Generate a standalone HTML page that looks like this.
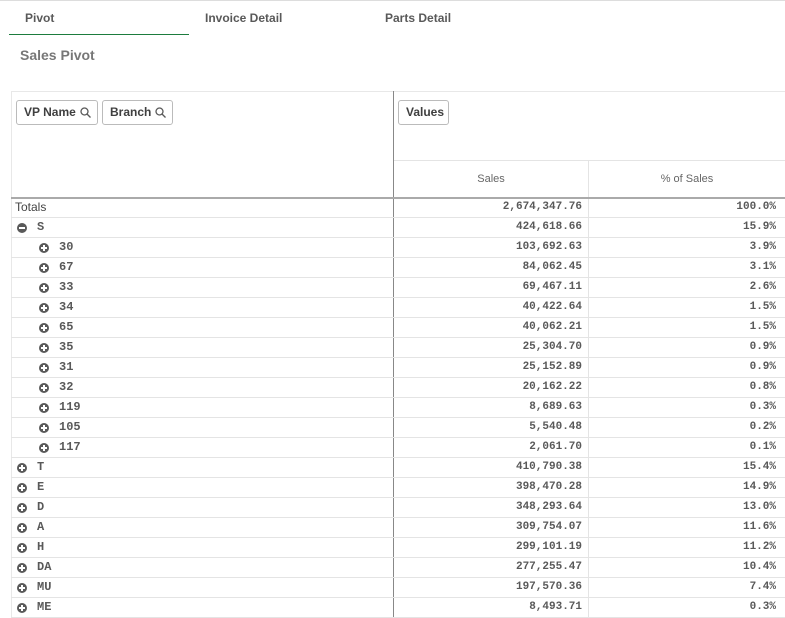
<!DOCTYPE html>
<html><head><style>
*{margin:0;padding:0;box-sizing:border-box}
body{width:785px;height:618px;background:#fff;font-family:"Liberation Sans",sans-serif;color:#595959;position:relative;overflow:hidden}
.a{position:absolute}
.tab{position:absolute;top:11px;font-size:12px;font-weight:bold;color:#595959}
.btn{position:absolute;top:100px;height:25px;border:1px solid #bbb;border-radius:3px;font-size:12px;font-weight:bold;line-height:23px;padding-left:7px;color:#404040}
.btn svg{position:absolute;top:6px}
.row{position:absolute;left:11px;width:774px;height:20px;border-bottom:1px solid #e4e4e4;line-height:19px}
.row .l{position:absolute;top:0;font-family:"Liberation Mono",monospace;font-weight:bold;font-size:12px;color:#595959}
.row .v{position:absolute;right:203px;top:0;font-family:"Liberation Mono",monospace;font-weight:bold;font-size:11px;width:180px;text-align:right}
.row .p{position:absolute;right:9px;top:0;font-family:"Liberation Mono",monospace;font-weight:bold;font-size:11px;text-align:right}
.ic{position:absolute;top:5px;width:10px;height:10px;border-radius:50%;background:#595959}
.ic:before{content:"";position:absolute;left:2px;top:4px;width:6px;height:2px;background:#fff}
.ic.pl:after{content:"";position:absolute;left:4px;top:2px;width:2px;height:6px;background:#fff}
</style></head><body>
<div class="a" style="left:0;top:0;width:785px;height:1px;background:#ddd"></div>
<div class="tab" style="left:25px">Pivot</div>
<div class="tab" style="left:205px">Invoice Detail</div>
<div class="tab" style="left:385px">Parts Detail</div>
<div class="a" style="left:9px;top:34px;width:180px;height:1px;background:#1d7c3e"></div>
<div class="a" style="left:20px;top:47px;font-size:14px;font-weight:bold;color:#777">Sales Pivot</div>
<div class="a" style="left:11px;top:91px;width:774px;height:1px;background:#e8e8e8"></div>
<div class="a" style="left:11px;top:91px;width:1px;height:527px;background:#e8e8e8"></div>
<div class="a" style="left:393px;top:91px;width:1px;height:527px;background:#888"></div>
<div class="btn" style="left:16px;width:82px">VP Name<svg style="left:63px" width="11" height="11" viewBox="0 0 11 11"><circle cx="4.5" cy="4.5" r="3.5" fill="none" stroke="#595959" stroke-width="1.3"/><path d="M7 7L10.5 10.5" stroke="#595959" stroke-width="1.3"/></svg></div>
<div class="btn" style="left:102px;width:71px">Branch<svg style="left:52px" width="11" height="11" viewBox="0 0 11 11"><circle cx="4.5" cy="4.5" r="3.5" fill="none" stroke="#595959" stroke-width="1.3"/><path d="M7 7L10.5 10.5" stroke="#595959" stroke-width="1.3"/></svg></div>
<div class="btn" style="left:398px;width:51px">Values</div>
<div class="a" style="left:394px;top:160px;width:391px;height:1px;background:#e4e4e4"></div>
<div class="a" style="left:588px;top:160px;width:1px;height:458px;background:#e4e4e4"></div>
<div class="a" style="left:394px;top:173px;width:194px;text-align:center;font-size:11px;color:#666">Sales</div>
<div class="a" style="left:589px;top:173px;width:196px;text-align:center;font-size:11px;color:#666">% of Sales</div>
<div class="a" style="left:11px;top:197px;width:774px;height:2px;background:#aaa"></div>
<div class="row" style="top:198px"><span class="l" style="left:4px;font-family:'Liberation Sans',sans-serif;font-size:12px;font-weight:normal;color:#444">Totals</span><span class="v">2,674,347.76</span><span class="p">100.0%</span></div>
<div class="row" style="top:218px"><span class="ic" style="left:6px"></span><span class="l" style="left:26px">S</span><span class="v">424,618.66</span><span class="p">15.9%</span></div>
<div class="row" style="top:238px"><span class="ic pl" style="left:28px"></span><span class="l" style="left:48px">30</span><span class="v">103,692.63</span><span class="p">3.9%</span></div>
<div class="row" style="top:258px"><span class="ic pl" style="left:28px"></span><span class="l" style="left:48px">67</span><span class="v">84,062.45</span><span class="p">3.1%</span></div>
<div class="row" style="top:278px"><span class="ic pl" style="left:28px"></span><span class="l" style="left:48px">33</span><span class="v">69,467.11</span><span class="p">2.6%</span></div>
<div class="row" style="top:298px"><span class="ic pl" style="left:28px"></span><span class="l" style="left:48px">34</span><span class="v">40,422.64</span><span class="p">1.5%</span></div>
<div class="row" style="top:318px"><span class="ic pl" style="left:28px"></span><span class="l" style="left:48px">65</span><span class="v">40,062.21</span><span class="p">1.5%</span></div>
<div class="row" style="top:338px"><span class="ic pl" style="left:28px"></span><span class="l" style="left:48px">35</span><span class="v">25,304.70</span><span class="p">0.9%</span></div>
<div class="row" style="top:358px"><span class="ic pl" style="left:28px"></span><span class="l" style="left:48px">31</span><span class="v">25,152.89</span><span class="p">0.9%</span></div>
<div class="row" style="top:378px"><span class="ic pl" style="left:28px"></span><span class="l" style="left:48px">32</span><span class="v">20,162.22</span><span class="p">0.8%</span></div>
<div class="row" style="top:398px"><span class="ic pl" style="left:28px"></span><span class="l" style="left:48px">119</span><span class="v">8,689.63</span><span class="p">0.3%</span></div>
<div class="row" style="top:418px"><span class="ic pl" style="left:28px"></span><span class="l" style="left:48px">105</span><span class="v">5,540.48</span><span class="p">0.2%</span></div>
<div class="row" style="top:438px"><span class="ic pl" style="left:28px"></span><span class="l" style="left:48px">117</span><span class="v">2,061.70</span><span class="p">0.1%</span></div>
<div class="row" style="top:458px"><span class="ic pl" style="left:6px"></span><span class="l" style="left:26px">T</span><span class="v">410,790.38</span><span class="p">15.4%</span></div>
<div class="row" style="top:478px"><span class="ic pl" style="left:6px"></span><span class="l" style="left:26px">E</span><span class="v">398,470.28</span><span class="p">14.9%</span></div>
<div class="row" style="top:498px"><span class="ic pl" style="left:6px"></span><span class="l" style="left:26px">D</span><span class="v">348,293.64</span><span class="p">13.0%</span></div>
<div class="row" style="top:518px"><span class="ic pl" style="left:6px"></span><span class="l" style="left:26px">A</span><span class="v">309,754.07</span><span class="p">11.6%</span></div>
<div class="row" style="top:538px"><span class="ic pl" style="left:6px"></span><span class="l" style="left:26px">H</span><span class="v">299,101.19</span><span class="p">11.2%</span></div>
<div class="row" style="top:558px"><span class="ic pl" style="left:6px"></span><span class="l" style="left:26px">DA</span><span class="v">277,255.47</span><span class="p">10.4%</span></div>
<div class="row" style="top:578px"><span class="ic pl" style="left:6px"></span><span class="l" style="left:26px">MU</span><span class="v">197,570.36</span><span class="p">7.4%</span></div>
<div class="row" style="top:598px"><span class="ic pl" style="left:6px"></span><span class="l" style="left:26px">ME</span><span class="v">8,493.71</span><span class="p">0.3%</span></div>
</body></html>
